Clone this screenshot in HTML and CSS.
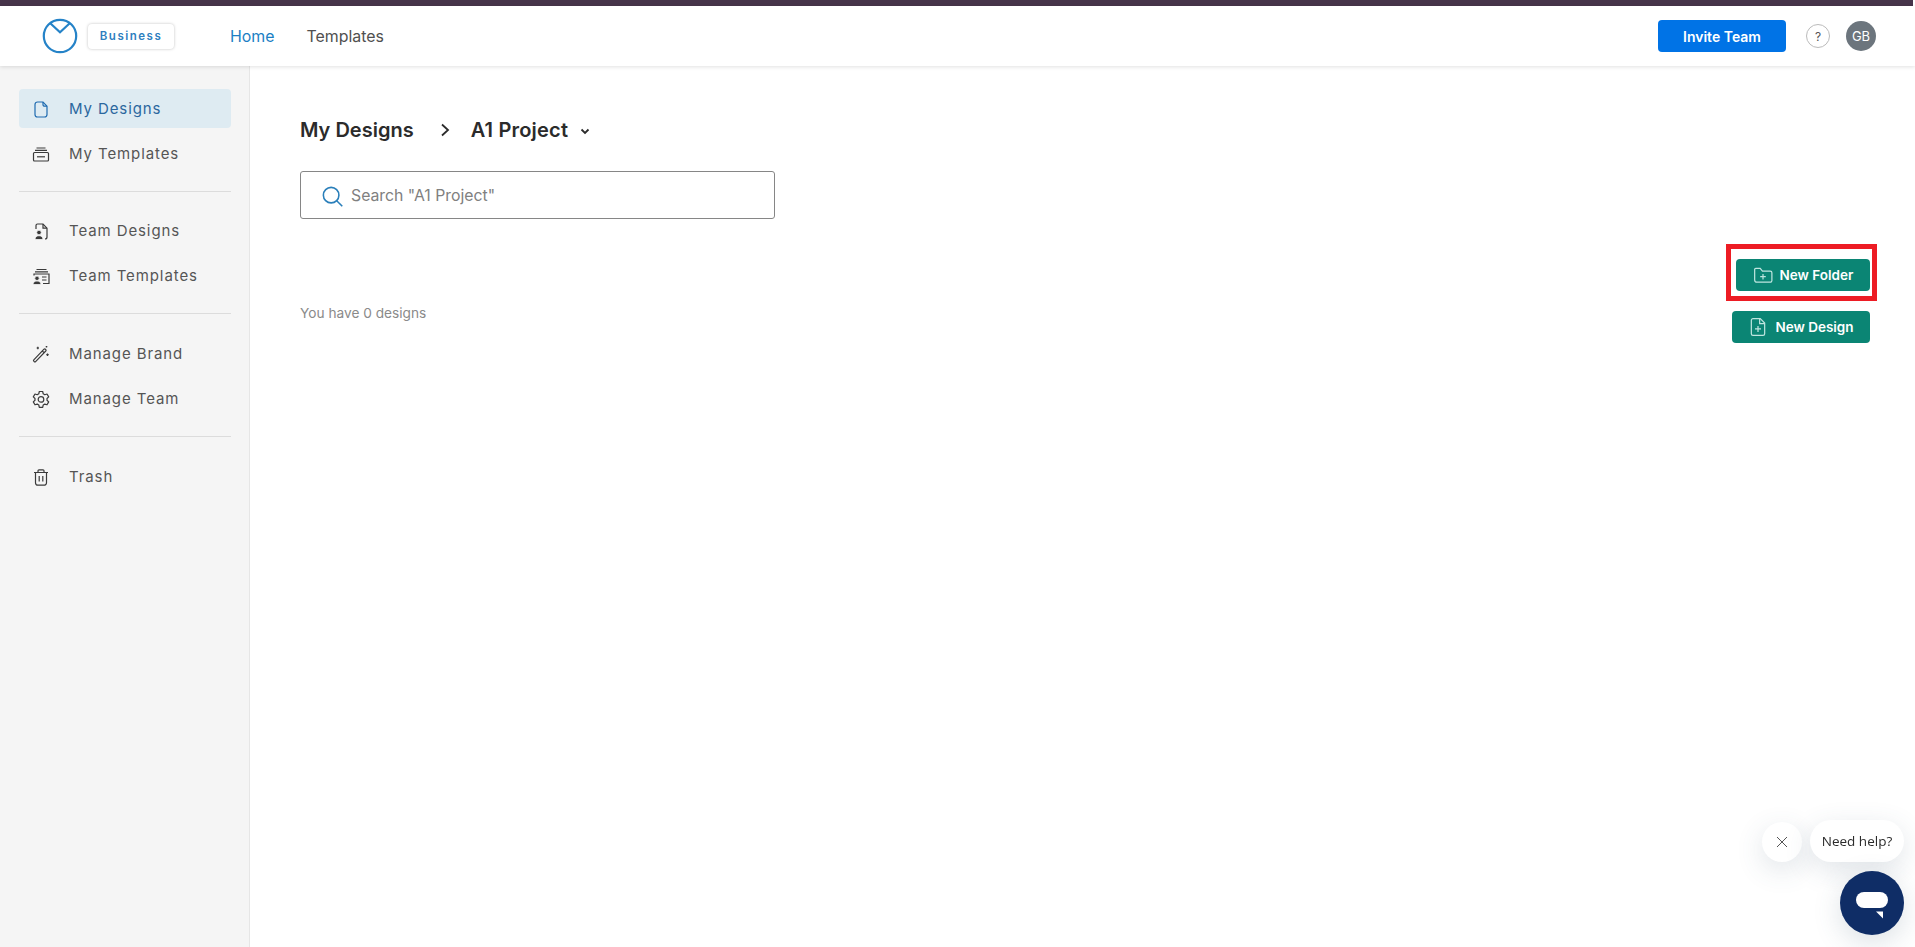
FILE: index.html
```html
<!DOCTYPE html>
<html lang="en">
<head>
<meta charset="utf-8">
<title>My Designs</title>
<link rel="stylesheet" href="styles.css">
</head>
<body>
<div class="page">
  <div class="topline"></div>
  <header class="header">
    <svg class="logo" viewBox="0 0 36 36"><circle cx="18" cy="18" r="16.200"/><path d="M8 5 18 14.200 28 5"/></svg>
    <span class="chip">Business</span>
    <nav class="nav"><a class="nav-home">Home</a><a class="nav-link">Templates</a></nav>
    <div class="header-right">
      <button class="invite">Invite Team</button>
      <span class="help">?</span>
      <span class="avatar">GB</span>
    </div>
  </header>
  <div class="content">
    <aside class="sidebar">
      <ul class="group">
        <li class="item active"><svg class="icon" viewBox="0 0 20 20"><path d="M6.500 3H12l4 4.200V15.500a2.500 2.500 0 0 1-2.500 2.500h-7A2.500 2.500 0 0 1 4 15.500v-10A2.500 2.500 0 0 1 6.500 3z"/><path d="M12 3v2.700A1.500 1.500 0 0 0 13.500 7.200H16"/></svg>My Designs</li>
        <li class="item"><svg class="icon" viewBox="0 0 20 20"><path d="M5.500 4h9M4 6.300h12"/><rect x="2.500" y="8.500" width="15" height="8.500" rx="1"/><path d="M6 12.800h8"/></svg>My Templates</li>
      </ul>
      <ul class="group">
        <li class="item"><svg class="icon" viewBox="0 0 20 20"><path d="M5 8V4.500A1.500 1.500 0 0 1 6.500 3H12l4 4.200V16a2 2 0 0 1-2 2"/><path d="M12 3v4.200h4"/><circle class="solid" cx="8" cy="11.500" r="2.300"/><path class="solid" d="M4 18.500c0-2.400 1.700-3.800 4-3.800s4 1.400 4 3.800z"/></svg>Team Designs</li>
        <li class="item"><svg class="icon" viewBox="0 0 20 20"><path d="M5.500 3.500h10M4 5.800h13"/><path d="M3 9.500V8h15v9.500h-6"/><path d="M11 11h4.500M11 14h4.500"/><circle class="solid" cx="6" cy="12.300" r="2.200"/><path class="solid" d="M2 18.500c0-2.300 1.700-3.500 4-3.500s4 1.200 4 3.500z"/></svg>Team Templates</li>
      </ul>
      <ul class="group">
        <li class="item"><svg class="icon" viewBox="0 0 20 20"><path d="M2.800 15.800 13 5.200a1 1 0 0 1 1.400 0l.4.400a1 1 0 0 1 0 1.400L4.600 17.600a1 1 0 0 1-1.400 0l-.4-.4a1 1 0 0 1 0-1.400z"/><path d="M11.300 7l1.700 1.700"/><path d="M6.800 2.800v2.400M5.600 4h2.400M16.500 9.500v2.400M15.300 10.700h2.400M15.500 2v1.500M14.700 2.700h1.600"/></svg>Manage Brand</li>
        <li class="item"><svg class="icon" viewBox="0 0 20 20"><path d="M8.300 2.500h3.400l.5 2.300 1.600.9 2.200-.7 1.700 2.900-1.700 1.600v1.800l1.700 1.600-1.700 2.900-2.200-.7-1.600.9-.5 2.300H8.300l-.5-2.300-1.600-.9-2.200.7-1.700-2.900 1.700-1.600V9.500L2.300 7.900 4 5l2.200.7 1.600-.9z" stroke-linejoin="round"/><circle cx="10" cy="10.400" r="2.800"/></svg>Manage Team</li>
      </ul>
      <ul class="group">
        <li class="item"><svg class="icon" viewBox="0 0 20 20"><path d="M3 5.500h14M7 5.500V3.800A1 1 0 0 1 8 2.800h4a1 1 0 0 1 1 1v1.700"/><path d="M4.500 5.500v10.200a2.500 2.500 0 0 0 2.500 2.500h6a2.500 2.500 0 0 0 2.500-2.500V5.500"/><path d="M8.200 9v5.500M11.800 9v5.500"/></svg>Trash</li>
      </ul>
    </aside>
    <main class="main">
      <div class="crumbs">
        <span class="crumb">My Designs</span>
        <svg class="crumb-sep" viewBox="0 0 10 14"><path d="M2 1.500 8 7l-6 5.500"/></svg>
        <span class="crumb crumb-current">A1 Project</span>
        <svg class="crumb-caret" viewBox="0 0 10 7"><path d="M1.500 1.500 5 5l3.500-3.500"/></svg>
      </div>
      <div class="search">
        <svg class="search-icon" viewBox="0 0 20 20"><circle cx="8.700" cy="8.700" r="7.400"/><path d="M14 14l5.300 5.300"/></svg>
        <span class="search-text">Search "A1 Project"</span>
      </div>
      <div class="toolbar">
        <p class="count">You have 0 designs</p>
        <div class="actions">
          <div class="highlight">
            <button class="action action-folder"><svg class="action-icon" viewBox="0 0 18 18"><path d="M1.500 4a1 1 0 0 1 1-1h4l2 2.500h7a1.500 1.500 0 0 1 1.500 1.500v7a1.500 1.500 0 0 1-1.500 1.500h-12A2 2 0 0 1 1.500 13.500z"/><path d="M9 8v5M6.500 10.500h5"/></svg>New Folder</button>
          </div>
          <button class="action"><svg class="action-icon" viewBox="0 0 18 18"><path d="M4.500 1.500H11L15 5.500v9.500a1.500 1.500 0 0 1-1.500 1.500h-9A1.500 1.500 0 0 1 3 15V3a1.500 1.500 0 0 1 1.500-1.500z"/><path d="M10.500 1.500V6H15M9 8v5.500M6.300 10.700h5.400"/></svg>New Design</button>
        </div>
      </div>
    </main>
  </div>
</div>
<div class="chat">
  <div class="chat-row">
    <span class="chat-close"><svg viewBox="0 0 12 12"><path d="M1 1l10 10M11 1 1 11"/></svg></span>
    <span class="chat-bubble">Need help?</span>
  </div>
  <span class="chat-launcher"><svg viewBox="0 0 32 28"><rect x="0" y="0" width="32" height="16" rx="8"/><path d="M20 19.500h7v7z"/></svg></span>
</div>
</body>
</html>
```
FILE: styles.css
```css
* { box-sizing: border-box; }
html, body { margin: 0; height: 100%; overflow: hidden; background: #fff; }
body { font-family: Inter, "Liberation Sans", sans-serif; color: #333; }
.page { height: 947px; display: flex; flex-direction: column; }
.topline { height: 6px; margin-right: 2px; background: #46344a; flex: none; }
.header {
  height: 60px; flex: none; display: flex; align-items: center; padding: 0 39px 0 42px;
  background: #fff; box-shadow: 0 1px 4px rgba(0,0,0,.12); position: relative; z-index: 2;
}
.logo { width: 36px; height: 36px; fill: none; stroke: #2583c8; stroke-width: 2.200; flex: none; }
.chip {
  margin-left: 10px; width: 86px; height: 25px; display: flex; align-items: center; justify-content: center;
  border-radius: 4px; background: #fff; box-shadow: 0 0 3px rgba(0,0,0,.25);
  font-size: 11.500px; font-weight: 600; letter-spacing: 1.500px; color: #2f7fbf;
}
.nav { display: flex; gap: 32px; margin-left: 56px; font-size: 15.900px; }
.nav-home { color: #1b7fc4; }
.nav-link { color: #505050; }
.header-right { margin-left: auto; display: flex; align-items: center; }
.invite {
  width: 128px; height: 32px; border: 0; border-radius: 4px; background: #0073e6; color: #fff;
  font: 600 14px Inter, sans-serif; padding: 0;
}
.help {
  margin-left: 20px; width: 24px; height: 24px; border-radius: 50%; border: 1px solid #bbb;
  display: flex; align-items: center; justify-content: center; font-size: 12px; color: #555;
}
.avatar {
  margin-left: 16px; width: 30px; height: 30px; border-radius: 50%; background: #6c757d; color: #fff;
  display: flex; align-items: center; justify-content: center; font-size: 13px;
}
.content { flex: 1; display: flex; min-height: 0; }
.sidebar { width: 250px; flex: none; background: #f5f5f5; border-right: 1px solid #e6e6e6; padding: 23px 18px 0 19px; }
.group { list-style: none; margin: 0; padding: 0 0 12px; }
.group + .group { border-top: 1px solid #dcdcdc; padding-top: 19px; }
.group + .group + .group { padding-top: 20px; }
.item {
  height: 39px; margin-bottom: 6px; display: flex; align-items: center; padding-left: 12px; border-radius: 4px;
  font-size: 15px; letter-spacing: .9px; color: #555;
}
.item.active { background: #deebf2; color: #2b679e; }
.icon { width: 20px; height: 20px; margin-right: 18px; flex: none; fill: none; stroke: currentColor; stroke-width: 1.200; color: #3a3a3a; }
.active .icon { color: #1f6bb0; }
.icon .solid { fill: currentColor; stroke: #f5f5f5; stroke-width: .8; }
.main { flex: 1; min-width: 0; padding: 49px 45px 0 50px; }
.crumbs { display: flex; align-items: center; height: 30px; color: #2b2b2b; }
.crumb { font-size: 20px; font-weight: 600; line-height: 30px; }
.crumb-current { letter-spacing: .2px; }
.crumb-sep { width: 10px; height: 14px; margin: 0 21px 0 26px; fill: none; stroke: #2b2b2b; stroke-width: 1.800; }
.crumb-caret { width: 10px; height: 7px; margin: 3px 0 0 12px; fill: none; stroke: #2b2b2b; stroke-width: 1.800; }
.search {
  margin-top: 26px; width: 475px; height: 48px; display: flex; align-items: center; padding-left: 21px;
  border: 1px solid #868686; border-radius: 3px;
}
.search-icon { width: 21px; height: 21px; flex: none; fill: none; stroke: #2a7fba; stroke-width: 1.500; margin-top: 3px; }
.search-text { margin-left: 8px; font-size: 15.800px; color: #808080; }
.toolbar { display: flex; justify-content: space-between; align-items: flex-start; margin-top: 25px; }
.count { margin: 60px 0 0; font-size: 13.700px; line-height: 18px; color: #8a8a8a; }
.actions { display: flex; flex-direction: column; align-items: flex-end; }
.highlight { margin-right: -7px; padding: 10px 2px 5px 5px; border: 5px solid #ed1c24; }
.action {
  height: 32px; width: 138px; border: 0; border-radius: 4px; background: #0b8574; color: #fff; display: flex; align-items: center;
  justify-content: center; gap: 7px; padding: 0; font: 600 13.500px Inter, sans-serif; margin-top: 10px;
}
.action-folder { width: 134px; margin-top: 0; }
.action-icon { width: 20px; height: 20px; flex: none; fill: none; stroke: #bfe5df; stroke-width: 1.100; }
.chat { position: fixed; right: 11px; bottom: 12px; display: flex; flex-direction: column; align-items: flex-end; gap: 9px; }
.chat-row { display: flex; align-items: center; gap: 8px; }
.chat-close, .chat-bubble { background: #fff; box-shadow: 0 8px 28px rgba(60,90,110,.16); }
.chat-close { width: 40px; height: 40px; margin-top: 2px; border-radius: 50%; display: flex; align-items: center; justify-content: center; }
.chat-close svg { width: 12px; height: 12px; fill: none; stroke: #555; stroke-width: 1; }
.chat-bubble { height: 42px; width: 94px; border-radius: 21px; display: flex; align-items: center; justify-content: center; font: 13.500px "Open Sans", "Liberation Sans", sans-serif; color: #2b2b2b; }
.chat-launcher { width: 64px; height: 64px; border-radius: 50%; background: #0f2d66; display: flex; align-items: center; justify-content: center; box-shadow: 0 8px 28px rgba(60,90,110,.18); }
.chat-launcher svg { width: 32px; height: 28px; fill: #fff; margin-top: 6px; }
```
